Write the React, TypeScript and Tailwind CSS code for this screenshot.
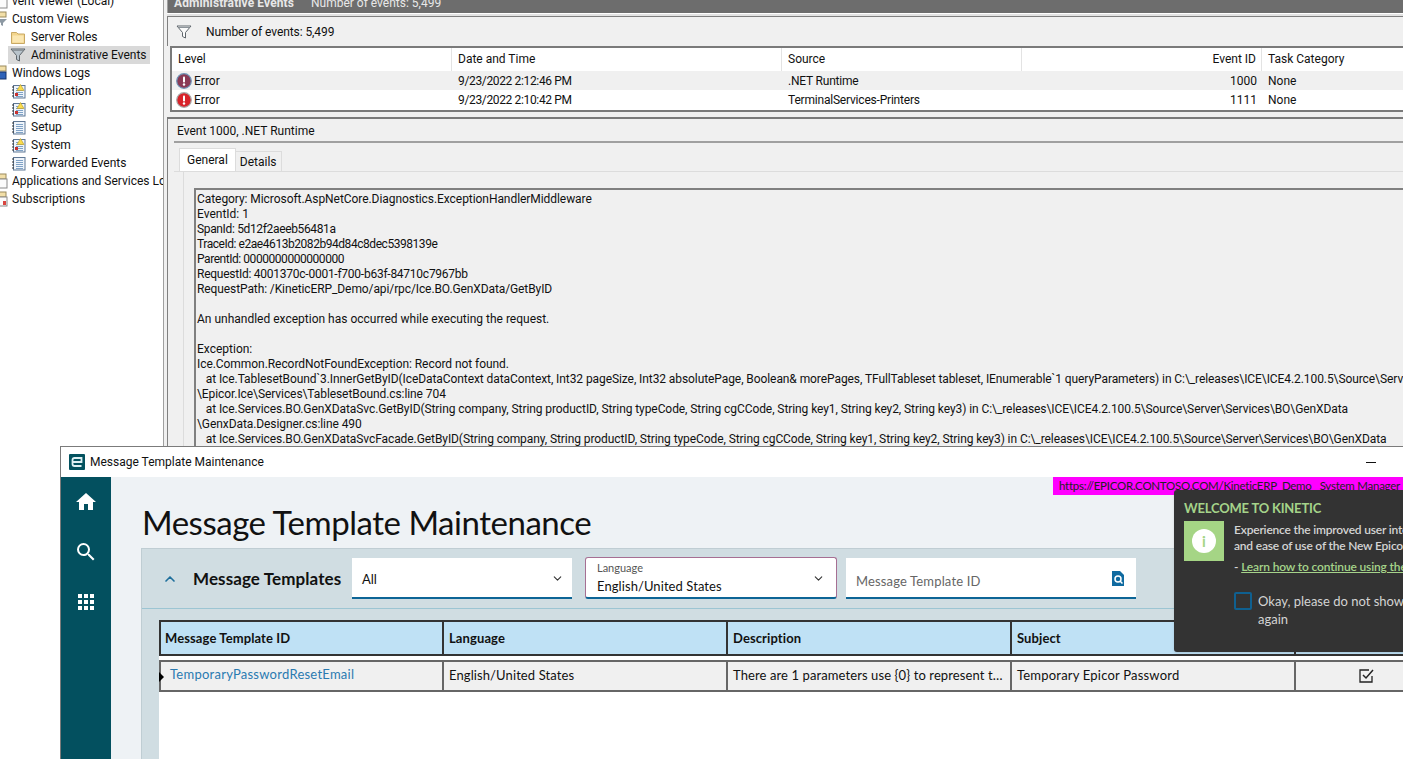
import type { ReactNode } from "react"
import { MdHome, MdSearch } from "react-icons/md"
import { ChevronDown, ChevronUp } from "lucide-react"

const segoe = "font-['Roboto',sans-serif]"
const source = "font-['Lato',sans-serif]"

function FolderIcon() {
  return (
    <svg width="16" height="16" viewBox="0 0 16 16" className="shrink-0">
      <path d="M1.5 3.5h5l1.5 1.5h6.500v9.500h-13z" fill="#f3d58c" stroke="#c9a964" />
      <path d="M2.500 6.500h11v7h-11z" fill="#fbe7b2" />
    </svg>
  )
}

function FilterIcon({ size = 16, fill = "#b9c4cc" }: { size?: number; fill?: string }) {
  return (
    <svg width={size} height={size} viewBox="0 0 16 16" className="shrink-0">
      <path d="M1 2h14L9.500 8.500V14l-3-1.500v-4z" fill={fill} stroke="#5f666c" strokeWidth="1" />
      <path d="M3 3.500h10" stroke="#8d959b" strokeWidth="1" />
    </svg>
  )
}

function LogIcon({ warn }: { warn?: boolean }) {
  return (
    <svg width="14" height="15" viewBox="0 0 14 15" className="ml-[2px] shrink-0">
      <rect x="1.500" y="1.500" width="11.500" height="12.500" fill="#eef4fb" stroke="#5f7896" />
      <path d="M0 3h2M0 6h2M0 9h2M0 12h2" stroke="#333" />
      <path d="M4 4.500h7M4 6.500h7M4 8.500h7M4 10.500h7M4 12.500h7" stroke="#7fa2c6" />
      {warn && (
        <>
          <path d="M8.500 0.500l3.500 6h-7z" fill="#fbdc4b" stroke="#b89a2a" strokeWidth="0.600" />
          <rect x="3" y="9" width="3" height="3" fill="#c8322f" />
        </>
      )}
    </svg>
  )
}

function RootIcon({ kind }: { kind: "filter" | "pc" | "doc" | "sub" }) {
  return (
    <svg width="8" height="16" viewBox="0 0 8 16" className="shrink-0">
      <rect x="-4" y="1" width="10" height="5" fill="#f2dfa8" stroke="#9a8a5c" />
      {kind === "filter" && <path d="M-4 8h11L3 12v3l-2-1v-2z" fill="#8d99a3" />}
      {kind === "pc" && <rect x="-4" y="7" width="10" height="7" fill="#2f62b8" stroke="#16326a" />}
      {kind === "doc" && <rect x="-4" y="6" width="11" height="9" fill="#fbfbfb" stroke="#8a8a8a" />}
      {kind === "sub" && (
        <>
          <rect x="-4" y="6" width="11" height="9" fill="#fbfbfb" stroke="#8a8a8a" />
          <rect x="3" y="10" width="3" height="4" fill="#d9453f" />
        </>
      )}
    </svg>
  )
}

function TreeRow({ icon, label, indent, selected }: { icon: ReactNode; label: string; indent?: boolean; selected?: boolean }) {
  return (
    <div className={`flex h-[18px] items-center ${indent ? (selected ? "pl-[8px]" : "pl-[10px]") : "pl-0"}`}>
      <div className={`flex h-[18px] items-center ${indent ? "gap-[5px]" : "gap-[4px]"} ${selected ? "bg-[#d9d9d9] pl-[2px] pr-[3px]" : ""}`}>
        {icon}
        <span>{label}</span>
      </div>
    </div>
  )
}

function ErrorIcon({ dim }: { dim?: boolean }) {
  return (
    <svg width="16" height="16" viewBox="0 0 16 16" className="shrink-0">
      <circle cx="8" cy="8" r="7.300" fill={dim ? "#8a3a55" : "#d8232a"} stroke={dim ? "#6f93b5" : "#a9a9a9"} strokeWidth="1.200" />
      <rect x="7" y="3.500" width="2" height="6" rx="0.800" fill="#fff" />
      <circle cx="8" cy="11.500" r="1.200" fill="#fff" />
    </svg>
  )
}

const eventRows = [
  { time: "9/23/2022 2:12:46 PM", source: ".NET Runtime", id: "1000", dim: true },
  { time: "9/23/2022 2:10:42 PM", source: "TerminalServices-Printers", id: "1111", dim: false },
]

const detailLines = [
  { text: "Category: Microsoft.AspNetCore.Diagnostics.ExceptionHandlerMiddleware", track: "tracking-[-0.06px]" },
  { text: "EventId: 1", track: "" },
  { text: "SpanId: 5d12f2aeeb56481a", track: "tracking-[-0.35px]" },
  { text: "TraceId: e2ae4613b2082b94d84c8dec5398139e", track: "tracking-[-0.45px]" },
  { text: "ParentId: 0000000000000000", track: "tracking-[-0.45px]" },
  { text: "RequestId: 4001370c-0001-f700-b63f-84710c7967bb", track: "tracking-[-0.25px]" },
  { text: "RequestPath: /KineticERP_Demo/api/rpc/Ice.BO.GenXData/GetByID", track: "tracking-[-0.1px]" },
  { text: "\u00a0", track: "" },
  { text: "An unhandled exception has occurred while executing the request.", track: "" },
  { text: "\u00a0", track: "" },
  { text: "Exception:", track: "" },
  { text: "Ice.Common.RecordNotFoundException: Record not found.", track: "tracking-[-0.06px]" },
  {
    text: "\u00a0\u00a0\u00a0at Ice.TablesetBound`3.InnerGetByID(IceDataContext dataContext, Int32 pageSize, Int32 absolutePage, Boolean& morePages, TFullTableset tableset, IEnumerable`1 queryParameters) in C:\\_releases\\ICE\\ICE4.2.100.5\\Source\\Server\\Services\\Lib",
    track: "tracking-[-0.08px]",
  },
  { text: "\\Epicor.Ice\\Services\\TablesetBound.cs:line 704", track: "tracking-[-0.08px]" },
  {
    text: "\u00a0\u00a0\u00a0at Ice.Services.BO.GenXDataSvc.GetByID(String company, String productID, String typeCode, String cgCCode, String key1, String key2, String key3) in C:\\_releases\\ICE\\ICE4.2.100.5\\Source\\Server\\Services\\BO\\GenXData",
    track: "tracking-[-0.08px]",
  },
  { text: "\\GenxData.Designer.cs:line 490", track: "tracking-[-0.08px]" },
  {
    text: "\u00a0\u00a0\u00a0at Ice.Services.BO.GenXDataSvcFacade.GetByID(String company, String productID, String typeCode, String cgCCode, String key1, String key2, String key3) in C:\\_releases\\ICE\\ICE4.2.100.5\\Source\\Server\\Services\\BO\\GenXData",
    track: "tracking-[-0.08px]",
  },
]

const eventColumns = "grid grid-cols-[280px_330px_240px_240px_1fr] items-center"

function EventViewer() {
  return (
    <div className={`flex h-[447px] overflow-hidden text-[12px] text-[#111] ${segoe}`}>
      <div className="-mt-[8px] w-[164px] shrink-0 overflow-hidden border-r border-[#a0a0a0] whitespace-nowrap">
        <TreeRow icon={<RootIcon kind="doc" />} label="vent Viewer (Local)" />
        <TreeRow icon={<RootIcon kind="filter" />} label="Custom Views" />
        <TreeRow indent icon={<FolderIcon />} label="Server Roles" />
        <TreeRow indent selected icon={<FilterIcon />} label="Administrative Events" />
        <TreeRow icon={<RootIcon kind="pc" />} label="Windows Logs" />
        <TreeRow indent icon={<LogIcon warn />} label="Application" />
        <TreeRow indent icon={<LogIcon warn />} label="Security" />
        <TreeRow indent icon={<LogIcon />} label="Setup" />
        <TreeRow indent icon={<LogIcon warn />} label="System" />
        <TreeRow indent icon={<LogIcon />} label="Forwarded Events" />
        <TreeRow icon={<RootIcon kind="doc" />} label="Applications and Services Logs" />
        <TreeRow icon={<RootIcon kind="sub" />} label="Subscriptions" />
      </div>
      <div className="flex min-w-0 flex-1 flex-col bg-[#f0f0f0] pl-[3px]">
        <div className="flex h-[13px] items-end gap-[17px] overflow-hidden border-l border-[#a0a0a0] bg-[#6d6d6d] pb-[3px] pl-[6px] leading-[14px] text-[#e8e8e8]">
          <span className="font-bold tracking-[0.1px]">Administrative Events</span>
          <span>Number of events: 5,499</span>
        </div>
        <div className="h-[1px] bg-white" />
        <div className="h-[3px] border-b border-[#808080] bg-[#e3e3e3]" />
        <div className="flex h-[29px] items-center gap-[14px] border-l border-[#808080] pl-[8px] tracking-[-0.08px]">
          <FilterIcon fill="#fbfbfb" />
          <span>Number of events: 5,499</span>
        </div>
        <div className="ml-[3px] h-[66px] overflow-hidden border-y-2 border-l-2 border-[#7a7a7a] bg-white">
          <div className={`${eventColumns} h-[23px]`}>
            <div className="h-full border-r border-[#e3e3e3] pl-[6px] leading-[23px]">Level</div>
            <div className="h-full border-r border-[#e3e3e3] pl-[6px] leading-[23px]">Date and Time</div>
            <div className="h-full border-r border-[#e3e3e3] pl-[6px] leading-[23px]">Source</div>
            <div className="h-full border-r border-[#e3e3e3] pr-[5px] text-right leading-[23px]">Event ID</div>
            <div className="h-full pl-[6px] leading-[23px]">Task Category</div>
          </div>
          {eventRows.map((row) => (
            <div className={`${eventColumns} h-[19px] ${row.dim ? "bg-[#f0f0f0]" : "bg-white"}`} key={row.id}>
              <div className="flex items-center gap-[2px] pl-[4px]">
                <ErrorIcon dim={row.dim} />
                <span>Error</span>
              </div>
              <div className="pl-[6px] tracking-[-0.35px]">{row.time}</div>
              <div className="pl-[6px] tracking-[-0.2px]">{row.source}</div>
              <div className="pr-[5px] text-right">{row.id}</div>
              <div className="pl-[6px]">None</div>
            </div>
          ))}
        </div>
        <div className="h-[7px] border-b-2 border-[#7a7a7a] bg-[#f0f0f0]" />
        <div className="flex min-h-0 flex-1 flex-col border-l border-[#808080] pl-[6px]">
          <div className="flex h-[24px] items-center border-b-2 border-[#a0a0a0] pl-[3px] pt-[1px]">Event 1000, .NET Runtime</div>
          <div className="flex h-[28px] items-end pl-[5px]">
            <div className="flex h-[23px] items-center border border-b-0 border-[#dcdcdc] bg-white px-[7px]">General</div>
            <div className="flex h-[20px] items-center border border-b-0 border-l-0 border-[#dcdcdc] px-[4px]">Details</div>
          </div>
          <div className="min-h-0 flex-1 border-t border-[#dcdcdc] pl-[9px]">
            <div className="h-full border-l border-[#dcdcdc] pl-[10px] pt-[16px]">
              <div className="h-full overflow-hidden border-t-2 border-l-2 border-[#808080] pl-[1px] pt-[2px] leading-[15px]">
                {detailLines.map((line, index) => (
                  <div className={`whitespace-nowrap ${line.track}`} key={index}>
                    {line.text}
                  </div>
                ))}
              </div>
            </div>
          </div>
        </div>
      </div>
    </div>
  )
}

function FieldUnderline({ className, children }: { className: string; children: ReactNode }) {
  return <div className={`relative shrink-0 border-b-2 border-[#0d6596] bg-white ${className}`}>{children}</div>
}

const gridColumns = "grid grid-cols-[283px_284px_284px_284px_1fr]"

function MaintenanceWindow() {
  return (
    <div className={`absolute left-[60px] top-[446px] flex h-[313px] w-[1343px] flex-col border-l border-t border-[#7b7b7b] bg-white text-[#111] ${source}`}>
      <div className="flex h-[30px] shrink-0 items-center pl-[8px] pr-[27px]">
        <svg width="16" height="16" viewBox="0 0 16 16" fill="none" className="shrink-0">
          <rect width="16" height="16" rx="1" fill="#03525f" />
          <path d="M3.500 8V6q0-2 2-2h7v4h-9v2q0 2 2 2h7" stroke="#dff1f4" strokeWidth="1.800" />
        </svg>
        <span className={`ml-[5px] text-[12px] ${segoe}`}>Message Template Maintenance</span>
        <div className="ml-auto h-[1px] w-[10px] bg-[#111]" />
      </div>
      <div className="flex min-h-0 flex-1">
        <div className="flex w-[50px] shrink-0 flex-col items-center gap-[26px] bg-[#03505f] pt-[13px] text-white">
          <MdHome size={24} />
          <MdSearch size={24} />
          <svg width="16" height="16" viewBox="0 0 16 16" fill="#fff" className="mt-[4px]">
            {[0, 6, 12].map((y) => [0, 6, 12].map((x) => <rect height="4" key={`${x}-${y}`} width="4" x={x} y={y} />))}
          </svg>
        </div>
        <div className="flex min-w-0 flex-1 flex-col bg-[#eef2f5]">
          <div className="flex h-[18px] shrink-0 justify-end">
            <div className="w-[350px] bg-[#ff00ff] pl-[6px] text-[11.500px] leading-[18px] tracking-[-0.25px] whitespace-nowrap text-[#222]">
              https://EPICOR.CONTOSO.COM/KineticERP_Demo&nbsp;&nbsp;&nbsp;System Manager
            </div>
          </div>
          <h1 className="ml-[31px] mt-[7px] h-[46px] text-[33px] leading-[40px] font-normal tracking-[-0.47px] whitespace-nowrap">Message Template Maintenance</h1>
          <div className="ml-[30px] flex min-h-0 flex-1 flex-col border-t border-l border-[#bfcdd3] bg-[#d0dde2]">
            <div className="flex h-[60px] shrink-0 items-center border-b border-[#9cc5d3]">
              <ChevronUp className="ml-[20px] text-[#1f6f9c]" size={16} strokeWidth={2.500} />
              <span className="ml-[15px] w-[159px] text-[17px] font-bold tracking-[0.1px] whitespace-nowrap">Message Templates</span>
              <FieldUnderline className="h-[41px] w-[220px]">
                <span className="absolute left-[10px] top-[12px] text-[13px]">All</span>
                <ChevronDown className="absolute right-[8px] top-[14px] text-[#333]" size={13} strokeWidth={2} />
              </FieldUnderline>
              <div className="relative mb-[2px] ml-[13px] h-[42px] w-[252px] shrink-0 rounded-[3px] border border-b-2 border-[#a66f93] border-b-[#0d6596] bg-white">
                <span className="absolute left-[11px] top-[2px] text-[11px] text-[#555]">Language</span>
                <span className="absolute left-[11px] top-[19px] text-[13px] tracking-[0.08px]">English/United States</span>
                <ChevronDown className="absolute right-[11px] top-[14px] text-[#333]" size={13} strokeWidth={2} />
              </div>
              <FieldUnderline className="ml-[9px] h-[41px] w-[290px]">
                <span className="absolute left-[10px] top-[14px] text-[13px] tracking-[0.15px] text-[#666]">Message Template ID</span>
                <svg width="12" height="15" viewBox="0 0 12 15" className="absolute right-[12px] top-[13px]">
                  <path d="M0 0h8l4 4v11H0z" fill="#0f6aa0" />
                  <circle cx="6" cy="8" r="3" fill="#0f6aa0" stroke="#fff" strokeWidth="1.500" />
                  <path d="M8 10l2.500 2.500" stroke="#fff" strokeWidth="1.500" />
                </svg>
              </FieldUnderline>
            </div>
            <div className="ml-[17px] mt-[11px] flex min-h-0 flex-1 flex-col bg-white">
              <div className={`${gridColumns} h-[36px] shrink-0 border-y-2 border-l-2 border-[#333] bg-[#bfe1f5] text-[13px] font-bold tracking-[0.1px]`}>
                {["Message Template ID", "Language", "Description", "Subject", ""].map((title) => (
                  <div className="border-r-2 border-[#333] pl-[5px] leading-[32px] first:pl-[4px] last:border-r-0" key={title}>
                    {title}
                  </div>
                ))}
              </div>
              <div className="h-[4px] shrink-0 bg-white" />
              <div className={`${gridColumns} relative h-[32px] shrink-0 border-y-2 border-l-2 border-[#666] bg-[#f0f0f0] text-[13px] leading-[26px] tracking-[0.1px]`}>
                <div className="absolute -left-[2px] top-[10px] h-0 w-0 border-y-[5px] border-l-[5px] border-y-transparent border-l-black" />
                <div className="border-r-2 border-[#666] pl-[9px] leading-[24px] tracking-[0.25px] text-[#2a7ab0]">TemporaryPasswordResetEmail</div>
                <div className="border-r-2 border-[#666] pl-[5px]">English/United States</div>
                <div className="truncate border-r-2 border-[#666] pl-[5px] pr-[4px]">There are 1 parameters use {"{0}"} to represent the temporary password</div>
                <div className="border-r-2 border-[#666] pl-[5px] tracking-[0.2px]">Temporary Epicor Password</div>
                <div className="w-[140px] pt-[6px]">
                  <svg width="16" height="16" viewBox="0 0 16 16" fill="none" className="mx-auto">
                    <path d="M14 8v6H2V2h9" stroke="#222" strokeWidth="1.300" />
                    <path d="M5 7l3 3 7-8" stroke="#222" strokeWidth="1.500" />
                  </svg>
                </div>
              </div>
            </div>
          </div>
        </div>
      </div>
      <div className="absolute left-[1113px] top-[43px] h-[162px] w-[240px] rounded-[3px] bg-[#333] pl-[10px] pt-[10px] text-[12px] whitespace-nowrap text-[#d4d4d4] shadow">
        <div className="text-[13px] leading-[16px] font-bold tracking-[-0.2px] text-[#a5d38a]">WELCOME TO KINETIC</div>
        <div className="mt-[5px] flex">
          <div className="flex h-[40px] w-[40px] shrink-0 items-center justify-center bg-[#a5d585]">
            <div className="flex h-[24px] w-[24px] items-center justify-center rounded-full bg-white text-[15px] leading-none font-bold text-[#a5d585]">i</div>
          </div>
          <div className="ml-[10px] leading-[16px] font-semibold">
            <div className="pt-[1px] tracking-[-0.2px]">Experience the improved user interface</div>
            <div className="tracking-[-0.2px]">and ease of use of the New Epicor</div>
            <div className="mt-[5px] tracking-[-0.15px]">
              - <span className="text-[#a5d38a] underline">Learn how to continue using the</span>
            </div>
          </div>
        </div>
        <div className="ml-[50px] mt-[17px] flex">
          <div className="h-[18px] w-[18px] shrink-0 rounded-[2px] border-2 border-[#0f6090]" />
          <div className="ml-[6px] text-[13px] leading-[18px]">
            Okay, please do not show
            <br />
            again
          </div>
        </div>
      </div>
    </div>
  )
}

export default function App() {
  return (
    <div className="relative h-[759px] w-[1403px] overflow-hidden bg-white">
      <EventViewer />
      <MaintenanceWindow />
    </div>
  )
}
